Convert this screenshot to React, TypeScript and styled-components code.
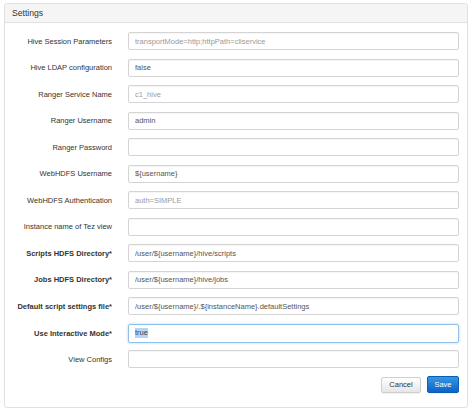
import React from "react";
import styled, { createGlobalStyle } from "styled-components";

const Global = createGlobalStyle`
  html, body { margin: 0; padding: 0; background: #fff; }
  body { font-family: "Liberation Sans", Arial, Helvetica, sans-serif; color: #333; }
  * { box-sizing: border-box; }
`;

const Panel = styled.div`
  margin: 3px 6px 0 4px;
  width: 464px;
  border: 1px solid #e1e1e1;
  border-radius: 3px;
  background: #fff;
`;

const Header = styled.div`
  height: 19px;
  background: #f5f5f5;
  border-bottom: 1px solid #e1e1e1;
  border-radius: 3px 3px 0 0;
  padding: 0 7px;
  display: flex;
  align-items: center;
  font-size: 8.6px;
  color: #333;
`;

const Body = styled.div`
  padding: 9px 8px 14px 8px;
`;

const Row = styled.div`
  display: grid;
  grid-template-columns: 99px 1fr;
  column-gap: 16px;
  align-items: center;
  height: 18px;
  margin-bottom: 8.5px;
`;

const Label = styled.label<{ $bold?: boolean }>`
  text-align: right;
  font-size: 7.5px;
  font-weight: ${(p) => (p.$bold ? 700 : 400)};
  color: #333;
  white-space: nowrap;
`;

const Input = styled.input`
  height: 18px;
  width: 100%;
  border: 1px solid #d4d4d4;
  border-radius: 2px;
  padding: 0 6px;
  font-family: inherit;
  font-size: 7.5px;
  color: #555;
  background: #fff;
  outline: none;
  box-shadow: inset 0 1px 1px rgba(0, 0, 0, 0.04);
  &::placeholder { color: #9a9a9a; }
`;

const FocusedField = styled.div`
  height: 19px;
  width: 100%;
  border: 1px solid #8fbfe6;
  border-radius: 2px;
  padding: 0 6px;
  font-size: 7.5px;
  color: #555;
  display: flex;
  align-items: center;
  box-shadow: 0 0 3px rgba(102, 175, 233, 0.5);
`;

const Selected = styled.span`
  background: #b5d5f7;
  color: #3a4a5a;
  line-height: 10px;
`;

const Actions = styled.div`
  display: flex;
  justify-content: flex-end;
  align-items: center;
  gap: 6px;
  margin-top: -0.5px;
`;

const Button = styled.button<{ $primary?: boolean }>`
  height: ${(p) => (p.$primary ? "17px" : "16px")};
  padding: 0;
  width: ${(p) => (p.$primary ? "32px" : "40px")};
  font-family: inherit;
  font-size: 7.5px;
  border-radius: 2px;
  cursor: pointer;
  color: ${(p) => (p.$primary ? "#fff" : "#333")};
  border: 1px solid ${(p) => (p.$primary ? "#0b5cb5" : "#cfcfcf")};
  background: ${(p) =>
    p.$primary
      ? "linear-gradient(#3796e4, #0c63c6)"
      : "linear-gradient(#ffffff, #e6e6e6)"};
  box-shadow: 0 1px 1px rgba(0, 0, 0, 0.06);
`;

type Field = {
  label: string;
  bold?: boolean;
  value?: string;
  placeholder?: string;
  focused?: boolean;
};

const fields: Field[] = [
  { label: "Hive Session Parameters", placeholder: "transportMode=http;httpPath=cliservice" },
  { label: "Hive LDAP configuration", value: "false" },
  { label: "Ranger Service Name", placeholder: "c1_hive" },
  { label: "Ranger Username", value: "admin" },
  { label: "Ranger Password", value: "" },
  { label: "WebHDFS Username", value: "${username}" },
  { label: "WebHDFS Authentication", placeholder: "auth=SIMPLE" },
  { label: "Instance name of Tez view", value: "" },
  { label: "Scripts HDFS Directory*", bold: true, value: "/user/${username}/hive/scripts" },
  { label: "Jobs HDFS Directory*", bold: true, value: "/user/${username}/hive/jobs" },
  {
    label: "Default script settings file*",
    bold: true,
    value: "/user/${username}/.${instanceName}.defaultSettings",
  },
  { label: "Use Interactive Mode*", bold: true, value: "true", focused: true },
  { label: "View Configs", value: "" },
];

export default function App() {
  return (
    <>
      <Global />
      <Panel>
        <Header>Settings</Header>
        <Body>
          {fields.map((f) => (
            <Row key={f.label}>
              <Label $bold={f.bold}>{f.label}</Label>
              {f.focused ? (
                <FocusedField>
                  <Selected>{f.value}</Selected>
                </FocusedField>
              ) : (
                <Input
                  readOnly
                  value={f.value ?? ""}
                  placeholder={f.placeholder}
                />
              )}
            </Row>
          ))}
          <Actions>
            <Button>Cancel</Button>
            <Button $primary>Save</Button>
          </Actions>
        </Body>
      </Panel>
    </>
  );
}
